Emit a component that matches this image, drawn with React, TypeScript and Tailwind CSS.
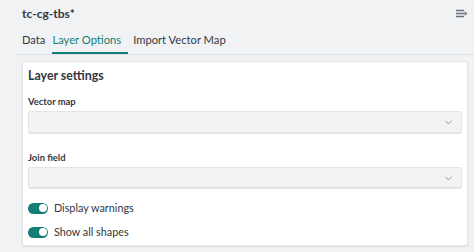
import { ChevronDown } from 'lucide-react';

function Toggle({ label }: { label: string }) {
  return (
    <div className="flex h-6 items-center gap-[6px]">
      <span className="relative h-[11px] w-[20px] rounded-full bg-[#117f75]">
        <span className="absolute right-[1.5px] top-[1.5px] h-[8px] w-[8px] rounded-full bg-white" />
      </span>
      <span className="text-[10.8px] text-[#343741]">{label}</span>
    </div>
  );
}

function SelectBox({ h }: { h: string }) {
  return (
    <div
      className={`flex ${h} items-center justify-end rounded-[2px] border border-[#e3e5e9] bg-[#f2f3f5] pr-[7px] shadow-[inset_0_-1px_0_#e0e2e6]`}
    >
      <ChevronDown className="size-[11px] text-[#8a8f98]" strokeWidth={2} />
    </div>
  );
}

export default function App() {
  return (
    <div
      className="h-[252px] w-[474px] overflow-hidden bg-[#f1f2f4] text-[#343741]"
      style={{ fontFamily: 'Lato, "Noto Sans", sans-serif' }}
    >
      <div className="flex items-center justify-between pl-[22px] pr-[5px] pt-[5px]">
        <h1 className="text-[12px] font-bold leading-[18px]">tc-cg-tbs*</h1>
        <svg width="14" height="10" viewBox="0 0 14 10" className="text-[#6a717d]">
          <path d="M1 1.5h8M1 4.5h8M1 7.5h8" stroke="currentColor" strokeWidth="1.3" />
          <path d="M9.5 2.2l3 2.3-3 2.3z" fill="currentColor" />
        </svg>
      </div>

      <div className="ml-[16px] mt-[9px] flex items-end border-b border-[#dcdfe3] pl-[6px] text-[11.2px] leading-[16px]">
        <div className="pb-[6px] pr-[7px]">Data</div>
        <div className="border-b-2 border-[#117f75] pb-[4px] pr-[7px] text-[#117f75]">Layer Options</div>
        <div className="pb-[6px] pl-[5px]">Import Vector Map</div>
      </div>

      <div className="ml-[22px] mr-[6px] mt-[6px] rounded-[3px] border border-[#e3e5e9] bg-white px-[5px] pb-[1px] pt-[5px] shadow-[0_1px_2px_rgba(0,0,0,0.08)]">
        <h2 className="text-[12.4px] font-bold leading-[18px]">Layer settings</h2>
        <div className="mt-[10px] text-[9.4px] font-bold leading-[14px]">Vector map</div>
        <div className="mt-[2px]">
          <SelectBox h="h-[23px]" />
        </div>
        <div className="mt-[17px] text-[9.4px] font-bold leading-[14px]">Join field</div>
        <div className="mt-[2px]">
          <SelectBox h="h-[22px]" />
        </div>
        <div className="mt-[7px] flex flex-col">
          <Toggle label="Display warnings" />
          <Toggle label="Show all shapes" />
        </div>
      </div>
    </div>
  );
}
